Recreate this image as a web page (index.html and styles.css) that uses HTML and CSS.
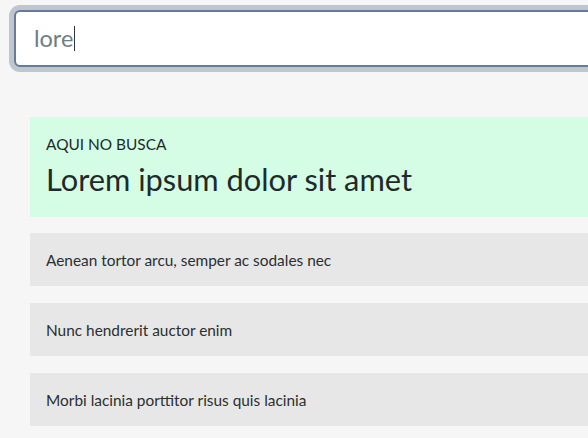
FILE: index.html
```html
<!DOCTYPE html>
<html lang="es">
<head>
<meta charset="utf-8">
<title>Busca</title>
<link rel="stylesheet" href="styles.css">
</head>
<body>
<div class="page">
  <div class="search-wrap">
    <div class="search"><span class="query">lore</span><span class="caret"></span></div>
  </div>
  <div class="list">
    <div class="card card-highlight">
      <div class="label">AQUI NO BUSCA</div>
      <div class="title">Lorem ipsum dolor sit amet</div>
    </div>
    <div class="card card-item">Aenean tortor arcu, semper ac sodales nec</div>
    <div class="card card-item">Nunc hendrerit auctor enim</div>
    <div class="card card-item">Morbi lacinia porttitor risus quis lacinia</div>
  </div>
</div>
</body>
</html>
```
FILE: styles.css
```css
html, body {
  margin: 0;
  padding: 0;
  background: #f6f6f6;
  overflow: hidden;
}
.page {
  width: 760px;
  font-family: Lato, "Open Sans", sans-serif;
  color: #222c2a;
}
.search-wrap {
  padding: 10px 0 0 14px;
}
.search {
  box-sizing: border-box;
  height: 57px;
  width: 700px;
  background: #fff;
  border: 2px solid #647b99;
  border-radius: 6px;
  box-shadow: 0 0 0 5px #bfc6ce;
  display: flex;
  align-items: center;
  padding-left: 18px;
}
.query {
  font-size: 23.5px;
  color: #6e7e84;
  line-height: 1;
}
.caret {
  display: inline-block;
  width: 1px;
  height: 25px;
  background: #333;
  margin-left: 1px;
}
.list {
  padding: 50px 0 0 30px;
  display: flex;
  flex-direction: column;
  gap: 17px;
}
.card {
  box-sizing: border-box;
  width: 700px;
  padding-left: 16px;
}
.card-highlight {
  background: #d5fde5;
  height: 100px;
  padding-top: 18px;
  margin-bottom: -1px;
}
.label {
  font-size: 15.4px;
  line-height: 18px;
  color: #1f2a2a;
}
.title {
  font-size: 30.8px;
  line-height: 38px;
  margin-top: 8px;
  color: #1f2a2a;
}
.card-item {
  background: #e7e7e7;
  height: 53px;
  display: flex;
  align-items: center;
  font-size: 15.4px;
  color: #2a3030;
}
```
